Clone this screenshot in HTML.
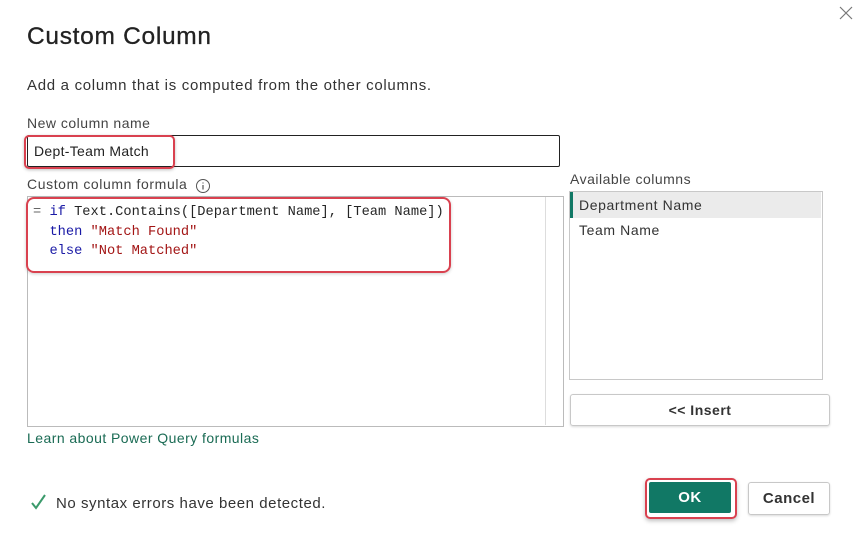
<!DOCTYPE html>
<html><head><style>
body{margin:0;width:857px;height:547px;background:#fff;position:relative;overflow:hidden;font-family:"Liberation Sans",sans-serif;color:#252525;letter-spacing:0.5px}
.a{position:absolute}
.mono{font-family:"Liberation Mono",monospace;font-size:13.7px;white-space:pre;letter-spacing:0}
</style></head><body>
<svg class="a" style="left:839px;top:6px" width="14" height="14"><path d="M1 1L13 13M13 1L1 13" stroke="#777" stroke-width="1.2"/></svg>
<div class="a" style="left:27px;top:23px;font-size:24.5px;color:#222;letter-spacing:0.7px;-webkit-text-stroke:0.3px #222">Custom Column</div>
<div class="a" style="left:27px;top:77px;font-size:15px;color:#333;letter-spacing:0.7px">Add a column that is computed from the other columns.</div>
<div class="a" style="left:27px;top:115px;font-size:14px;color:#444">New column name</div>
<div class="a" style="left:27px;top:135px;width:531px;height:30px;border:1px solid #222;border-radius:2px"></div>
<div class="a" style="left:24px;top:135px;width:147px;height:30px;border:2px solid #d9414f;border-radius:5px;box-shadow:0 1px 3px rgba(0,0,0,.25)"></div>
<div class="a" style="left:34px;top:143px;font-size:14px;color:#222;letter-spacing:0.3px">Dept-Team Match</div>
<div class="a" style="left:27px;top:176px;font-size:14px;color:#444;letter-spacing:0.6px">Custom column formula</div>
<svg class="a" style="left:195px;top:178px" width="16" height="16"><circle cx="8" cy="8" r="6.5" fill="none" stroke="#555"/><path d="M8 7v4.5M8 4.5v1" stroke="#555" stroke-width="1.2"/></svg>
<div class="a" style="left:27px;top:196px;width:535px;height:229px;border:1px solid #bbb"></div>
<div class="a" style="left:545px;top:197px;width:1px;height:228px;background:#ddd"></div>
<div class="a" style="left:26px;top:197px;width:421px;height:72px;border:2px solid #d9414f;border-radius:8px;box-shadow:0 1px 3px rgba(0,0,0,.2)"></div>
<div class="a mono" style="left:33px;top:203px;line-height:19.5px"><span style="color:#666">=</span> <span style="color:#1a1aa6">if</span> Text.Contains([Department Name], [Team Name])
  <span style="color:#1a1aa6">then</span> <span style="color:#a31515">"Match Found"</span>
  <span style="color:#1a1aa6">else</span> <span style="color:#a31515">"Not Matched"</span></div>
<div class="a" style="left:570px;top:171px;font-size:14px;color:#444">Available columns</div>
<div class="a" style="left:569px;top:191px;width:252px;height:187px;border:1px solid #c8c8c8"></div>
<div class="a" style="left:570px;top:192px;width:251px;height:26px;background:#ebebeb;border-left:3px solid #117865;box-sizing:border-box"></div>
<div class="a" style="left:579px;top:197px;font-size:14px;color:#333;letter-spacing:0.6px">Department Name</div>
<div class="a" style="left:579px;top:222px;font-size:14px;color:#333;letter-spacing:0.6px">Team Name</div>
<div class="a" style="left:570px;top:394px;width:258px;height:30px;border:1px solid #c8c8c8;border-radius:3px;box-shadow:0 1px 2px rgba(0,0,0,.15);text-align:center;line-height:30px;font-size:14px;font-weight:bold;color:#333">&lt;&lt; Insert</div>
<div class="a" style="left:27px;top:430px;font-size:14px;color:#1a6b54;letter-spacing:0.45px">Learn about Power Query formulas</div>
<svg class="a" style="left:30px;top:493px" width="18" height="18"><path d="M2 10l4 5L15 2" stroke="#3b9a6b" stroke-width="2" fill="none"/></svg>
<div class="a" style="left:56px;top:495px;font-size:15px;color:#333;letter-spacing:0.55px">No syntax errors have been detected.</div>
<div class="a" style="left:645px;top:478px;width:88px;height:37px;border:2px solid #d9414f;border-radius:5px;box-sizing:content-box;box-shadow:0 2px 4px rgba(0,0,0,.25)"></div>
<div class="a" style="left:649px;top:482px;width:82px;height:31px;background:#117865;border-radius:2px;color:#fff;font-size:15px;font-weight:bold;text-align:center;line-height:31px">OK</div>
<div class="a" style="left:748px;top:482px;width:80px;height:31px;border:1px solid #c8c8c8;border-radius:3px;box-shadow:0 1px 2px rgba(0,0,0,.15);text-align:center;line-height:31px;font-size:15px;font-weight:bold;color:#333">Cancel</div>
</body></html>
